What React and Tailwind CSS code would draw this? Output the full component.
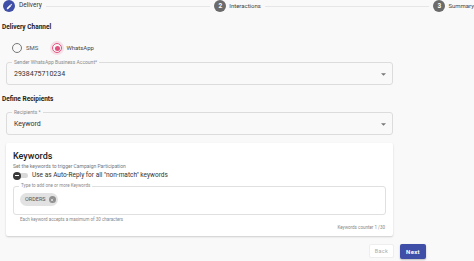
import React from 'react'

function StepCircle({ children, active }) {
  return (
    <div className={`w-[12px] h-[12px] rounded-full flex items-center justify-center shrink-0 ${active ? 'bg-[#3f4fa8]' : 'bg-[#6b6b6b]'}`}>
      {children}
    </div>
  )
}

function OutlinedSelect({ label, value }) {
  return (
    <div className="relative ml-[4px] w-[387px] h-[23px] border border-[#dcdcdc] rounded-[3px] flex items-center justify-between pl-[7px] pr-[6px]">
      <span className="absolute -top-[4px] left-[5px] px-[2px] bg-[#f9f9f9] text-[5px] leading-[6px] text-[#8a8a8a]">{label}</span>
      <span className="text-[7px] text-[#333] pt-[2px]">{value}</span>
      <svg width="5" height="3" viewBox="0 0 10 5" className="mt-[1px]">
        <path d="M0 0l5 5 5-5z" fill="#777" />
      </svg>
    </div>
  )
}

export default function App() {
  return (
    <div className="w-[474px] h-[261px] overflow-hidden bg-[#f9f9f9] text-[8px] leading-[1.2] font-['Roboto','Liberation_Sans',sans-serif]">
      {/* Stepper */}
      <div className="w-[474px] h-[12px] flex items-center pl-[3px]">
        <StepCircle active>
          <svg width="7" height="7" viewBox="0 0 24 24">
            <path d="M3 17.25V21h3.75L17.81 9.94l-3.75-3.75L3 17.25zM20.71 7.04a1 1 0 000-1.41l-2.34-2.34a1 1 0 00-1.41 0l-1.83 1.83 3.75 3.75 1.83-1.83z" fill="#fff" />
          </svg>
        </StepCircle>
        <span className="ml-[4px] text-[6.5px] text-[#333]">Delivery</span>
        <div className="flex-1 h-px bg-[#e6e6e6] mx-[4px]" />
        <StepCircle>
          <span className="text-[6.5px] font-bold text-white leading-none">2</span>
        </StepCircle>
        <span className="ml-[3px] text-[6px] text-[#444]">Interactions</span>
        <div className="flex-1 h-px bg-[#e6e6e6] mx-[4px]" />
        <StepCircle>
          <span className="text-[6.5px] font-bold text-white leading-none">3</span>
        </StepCircle>
        <span className="ml-[3px] text-[6px] text-[#444]">Summary</span>
      </div>

      <div className="pl-[2px]">
        <div className="mt-[10px] text-[6.5px] font-bold text-[#222] leading-[10px]">Delivery Channel</div>

        {/* Radios */}
        <div className="mt-[11px] flex items-center pl-[10px] h-[10px]">
          <div className="w-[10px] h-[10px] rounded-full border border-[#777]" />
          <span className="ml-[4px] text-[6px] text-[#555]">SMS</span>
          <div className="ml-[14px] w-[10px] h-[10px] rounded-full border border-[#e2527f] flex items-center justify-center shadow-[0_0_0_2px_rgba(226,82,127,0.15)]">
            <div className="w-[5px] h-[5px] rounded-full bg-[#e2527f]" />
          </div>
          <span className="ml-[4px] text-[6px] text-[#444]">WhatsApp</span>
        </div>

        <div className="mt-[9px]">
          <OutlinedSelect label="Sender WhatsApp Business Account*" value="2938475710234" />
        </div>

        <div className="mt-[9px] text-[6.5px] font-bold text-[#222] leading-[10px]">Define Recipients</div>

        <div className="mt-[8px]">
          <OutlinedSelect label="Recipients *" value="Keyword" />
        </div>

        {/* Keywords card */}
        <div className="mt-[8px] ml-[4px] w-[387px] h-[93px] bg-white rounded-[2px] shadow-[0_1px_2px_rgba(0,0,0,0.18)] pt-[7px] pl-[7px] pr-[6px]">
          <div className="text-[9px] font-medium text-[#222] leading-[12px]">Keywords</div>
          <div className="mt-[1px] text-[5px] text-[#777] leading-[7px]">Set the keywords to trigger Campaign Participation</div>
          <div className="mt-[1px] flex items-center h-[9px]">
            <div className="relative w-[15px] h-[9px] flex items-center">
              <div className="absolute left-[4px] w-[11px] h-[5px] rounded-full bg-[#d9d9d9]" />
              <div className="relative w-[8px] h-[8px] rounded-full bg-[#3a3a3a] flex items-center justify-center">
                <div className="w-[4px] h-[1px] bg-white" />
              </div>
            </div>
            <span className="ml-[4px] text-[6.5px] text-[#333]">Use as Auto-Reply for all "non-match" keywords</span>
          </div>

          <div className="relative mt-[6px] w-[373px] h-[29px] border border-[#e0e0e0] rounded-[3px] pl-[6px] pt-[6px]">
            <span className="absolute -top-[4px] left-[5px] px-[2px] bg-white text-[4.5px] leading-[6px] text-[#8a8a8a]">Type to add one or more Keywords</span>
            <div className="inline-flex items-center h-[13px] rounded-full bg-[#e2e2e2] pl-[5px] pr-[2px]">
              <span className="text-[5.5px] text-[#555]">ORDERS</span>
              <div className="ml-[3px] w-[7px] h-[7px] rounded-full bg-[#8f8f8f] flex items-center justify-center">
                <svg width="4" height="4" viewBox="0 0 10 10">
                  <path d="M2 2l6 6M8 2l-6 6" stroke="#e2e2e2" strokeWidth="2" />
                </svg>
              </div>
            </div>
          </div>
          <div className="mt-[1px] pl-[7px] text-[4.5px] text-[#888] leading-[7px]">Each keyword accepts a maximum of 30 characters</div>
          <div className="mt-[1px] text-right pr-[2px] text-[4.5px] text-[#888] leading-[7px]">Keywords counter 1 /30</div>
        </div>

        {/* Actions */}
        <div className="mt-[8px] flex justify-end pr-[48px] gap-[6px]">
          <button className="w-[25px] h-[14px] bg-white border border-[#eee] rounded-[2px] text-[5.5px] text-[#aaa] tracking-[0.3px]">Back</button>
          <button className="w-[26px] h-[15px] bg-[#3f4fa8] rounded-[2px] text-[6px] font-bold text-white tracking-[0.3px] shadow-[0_1px_2px_rgba(0,0,0,0.25)]">Next</button>
        </div>
      </div>
    </div>
  )
}
